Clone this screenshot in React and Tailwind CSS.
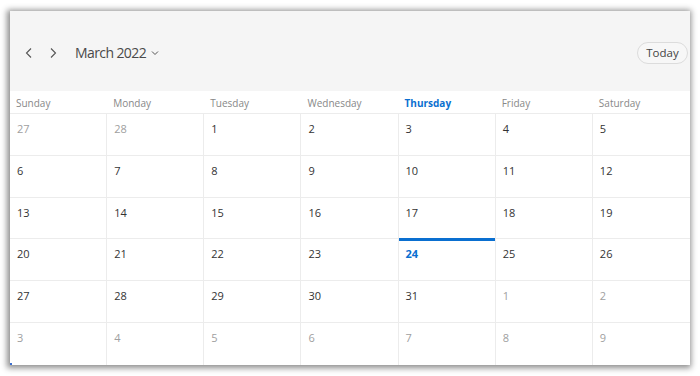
import React from "react";

const weekdays = ["Sunday", "Monday", "Tuesday", "Wednesday", "Thursday", "Friday", "Saturday"];

function buildDays() {
  const days = [];
  [27, 28].forEach((d) => days.push({ d, other: true }));
  for (let i = 1; i <= 31; i++) days.push({ d: i, other: false });
  for (let i = 1; i <= 9; i++) days.push({ d: i, other: true });
  return days;
}

export default function App() {
  const days = buildDays();
  return (
    <div
      className="w-[700px] h-[376px] bg-white pt-[11px] pl-[10px]"
      style={{ fontFamily: '"Open Sans", "Noto Sans", sans-serif' }}
    >
      <div className="relative w-[680px] h-[354px] bg-white flex flex-col shadow-[-1px_1px_6px_2px_rgba(0,0,0,0.45)]">
        <div className="h-[80px] bg-[#f5f5f5] flex items-center pl-[7px] pr-[2px] pt-[3px]">
          <button className="w-[24px] h-[24px] flex items-center justify-center text-[#555]">
            <svg width="10" height="12" viewBox="0 0 10 12" fill="none" stroke="currentColor" strokeWidth="1.1">
              <path d="M7 1.5 L2.5 6 L7 10.5" />
            </svg>
          </button>
          <button className="w-[24px] h-[24px] flex items-center justify-center text-[#555]">
            <svg width="10" height="12" viewBox="0 0 10 12" fill="none" stroke="currentColor" strokeWidth="1.1">
              <path d="M3 1.5 L7.5 6 L3 10.5" />
            </svg>
          </button>
          <div className="ml-[10px] flex items-center text-[#4a4a4a] text-[14px] tracking-[-0.6px]">
            <span>March 2022</span>
            <svg className="ml-[5px] mt-[1px]" width="8" height="6" viewBox="0 0 8 6" fill="none" stroke="#555" strokeWidth="1">
              <path d="M1 1.5 L4 4.5 L7 1.5" />
            </svg>
          </div>
          <div className="flex-1" />
          <button className="w-[51px] h-[22px] rounded-full border border-[#dcdcdc] bg-[#f7f7f7] text-[11.5px] text-[#444] flex items-center justify-center">
            Today
          </button>
        </div>
        <div className="h-[23px] grid grid-cols-7 border-b border-[#ececec] bg-white">
          {weekdays.map((w, i) => (
            <div
              key={w}
              className={
                "pl-[6px] pt-[2px] flex items-center text-[10px] " +
                (i === 4 ? "text-[#0a6fd0] font-bold" : "text-[#888]")
              }
            >
              {w}
            </div>
          ))}
        </div>
        <div className="flex-1 grid grid-cols-7 grid-rows-6">
          {days.map((day, idx) => {
            const col = idx % 7;
            const row = Math.floor(idx / 7);
            const isToday = !day.other && day.d === 24;
            return (
              <div
                key={idx}
                className={
                  "relative pl-[7px] pt-[7px] text-[11px] " +
                  (col < 6 ? "border-r border-[#ececec] " : "") +
                  (row < 5 ? "border-b border-[#ececec] " : "") +
                  (isToday ? "text-[#0a6fd0] font-bold " : day.other ? "text-[#a0a0a0] " : "text-[#333] ")
                }
              >
                {isToday && <div className="absolute left-0 right-0 top-[-1px] h-[3px] bg-[#0a6fd0]" />}
                {day.d}
              </div>
            );
          })}
        </div>
        <div className="absolute left-0 bottom-0 w-[2px] h-[2px] bg-[#3b6fd0]" />
      </div>
    </div>
  );
}
